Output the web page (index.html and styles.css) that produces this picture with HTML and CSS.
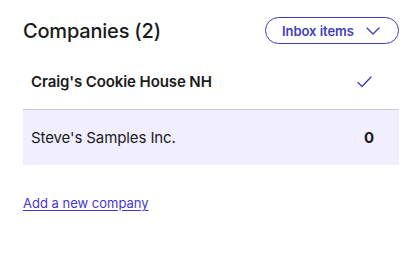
FILE: index.html
```html
<!DOCTYPE html>
<html>
<head>
<meta charset="utf-8">
<link rel="stylesheet" href="styles.css">
</head>
<body>
<div class="panel">
  <div class="header">
    <h2 class="title">Companies (2)</h2>
    <button class="inbox-btn">Inbox items
      <svg class="chev" width="14" height="8" viewBox="0 0 14 8"><path d="M1 1 L7 7 L13 1" fill="none" stroke="#3f3dbf" stroke-width="1.4" stroke-linecap="round" stroke-linejoin="round"/></svg>
    </button>
  </div>
  <div class="list">
    <div class="row row-first">
      <span class="name bold">Craig's Cookie House NH</span>
      <span class="status">
        <svg width="15" height="12" viewBox="0 0 15 12"><path d="M1 6.5 L5 10.5 L14 1" fill="none" stroke="#3f3dbf" stroke-width="1.4" stroke-linecap="round" stroke-linejoin="round"/></svg>
      </span>
    </div>
    <div class="row row-active">
      <span class="name">Steve's Samples Inc.</span>
      <span class="status count">0</span>
    </div>
  </div>
  <a class="add-link" href="#">Add a new company</a>
</div>
</body>
</html>
```
FILE: styles.css
```css
html, body {
  margin: 0;
  padding: 0;
  background: #ffffff;
}
body {
  font-family: Inter, "Noto Sans", sans-serif;
  color: #1a1a1a;
}
.panel {
  width: 376px;
  padding: 17px 0 0 23px;
}
.header {
  display: flex;
  align-items: center;
  justify-content: space-between;
  height: 27px;
}
.title {
  margin: 0;
  font-size: 20px;
  font-weight: 500;
  letter-spacing: -0.2px;
  color: #1a1a1a;
  line-height: 27px;
  padding-top: 2px;
}
.inbox-btn {
  display: flex;
  align-items: center;
  gap: 12px;
  box-sizing: border-box;
  height: 27px;
  width: 134px;
  padding: 0 0 0 16px;
  border: 1px solid #3f3dbf;
  border-radius: 14px;
  background: #ffffff;
  color: #3f3dbf;
  font-family: Inter, "Noto Sans", sans-serif;
  font-size: 13px;
  font-weight: 600;
  letter-spacing: -0.05px;
}
.chev {
  display: block;
}
.list {
  margin-top: 10px;
}
.row {
  display: flex;
  align-items: center;
  justify-content: space-between;
  height: 55px;
  padding: 0 25px 0 8px;
}
.row-first {
  border-bottom: 1px solid #cccccc;
}
.row-active {
  background: #f1efff;
}
.name {
  font-size: 15px;
  letter-spacing: -0.1px;
  color: #1a1a1a;
}
.bold {
  font-weight: 600;
}
.status {
  display: flex;
  align-items: center;
}
.status svg {
  display: block;
  margin-right: 2px;
}
.count {
  font-size: 15px;
  font-weight: 700;
}
.add-link {
  display: inline-block;
  margin-top: 30px;
  font-size: 13px;
  color: #4636cf;
  text-decoration: underline;
  text-underline-offset: 2px;
  letter-spacing: 0;
}
```
